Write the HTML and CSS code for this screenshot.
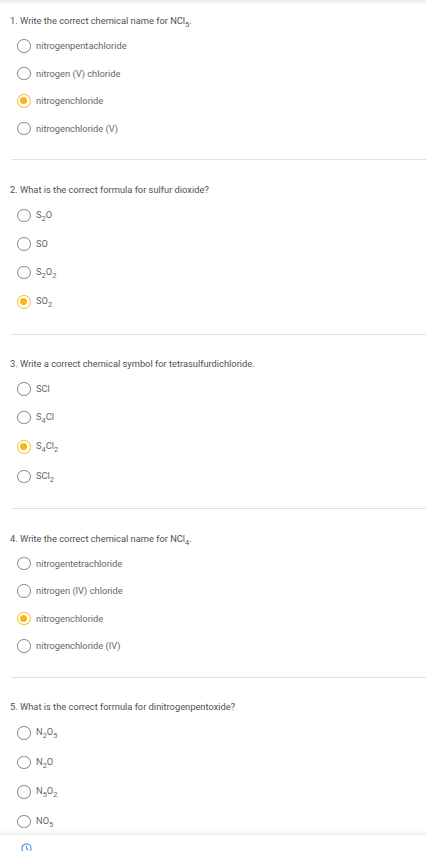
FILE: index.html
```html
<!DOCTYPE html>
<html>
<head>
<meta charset="utf-8">
<link rel="stylesheet" href="styles.css">
</head>
<body>
<div class="topshade"></div>
<main class="quiz">
  <section class="question">
    <div class="q-title">1. Write the correct chemical name for NCl<sub>5</sub>.</div>
    <ul class="options">
      <li class="option"><span class="radio"></span><span class="label">nitrogenpentachloride</span></li>
      <li class="option"><span class="radio"></span><span class="label">nitrogen (V) chloride</span></li>
      <li class="option"><span class="radio checked"></span><span class="label">nitrogenchloride</span></li>
      <li class="option"><span class="radio"></span><span class="label">nitrogenchloride (V)</span></li>
    </ul>
  </section>
  <hr class="divider">
  <section class="question">
    <div class="q-title">2. What is the correct formula for sulfur dioxide?</div>
    <ul class="options">
      <li class="option"><span class="radio"></span><span class="label">S<sub>2</sub>O</span></li>
      <li class="option"><span class="radio"></span><span class="label">SO</span></li>
      <li class="option"><span class="radio"></span><span class="label">S<sub>2</sub>O<sub>2</sub></span></li>
      <li class="option"><span class="radio checked"></span><span class="label">SO<sub>2</sub></span></li>
    </ul>
  </section>
  <hr class="divider">
  <section class="question">
    <div class="q-title">3. Write a correct chemical symbol for tetrasulfurdichloride.</div>
    <ul class="options">
      <li class="option"><span class="radio"></span><span class="label">SCl</span></li>
      <li class="option"><span class="radio"></span><span class="label">S<sub>4</sub>Cl</span></li>
      <li class="option"><span class="radio checked"></span><span class="label">S<sub>4</sub>Cl<sub>2</sub></span></li>
      <li class="option"><span class="radio"></span><span class="label">SCl<sub>2</sub></span></li>
    </ul>
  </section>
  <hr class="divider">
  <section class="question">
    <div class="q-title">4. Write the correct chemical name for NCl<sub>4</sub>.</div>
    <ul class="options">
      <li class="option"><span class="radio"></span><span class="label">nitrogentetrachloride</span></li>
      <li class="option"><span class="radio"></span><span class="label">nitrogen (IV) chloride</span></li>
      <li class="option"><span class="radio checked"></span><span class="label">nitrogenchloride</span></li>
      <li class="option"><span class="radio"></span><span class="label">nitrogenchloride (IV)</span></li>
    </ul>
  </section>
  <hr class="divider">
  <section class="question">
    <div class="q-title">5. What is the correct formula for dinitrogenpentoxide?</div>
    <ul class="options">
      <li class="option"><span class="radio"></span><span class="label">N<sub>2</sub>O<sub>5</sub></span></li>
      <li class="option"><span class="radio"></span><span class="label">N<sub>2</sub>O</span></li>
      <li class="option"><span class="radio"></span><span class="label">N<sub>5</sub>O<sub>2</sub></span></li>
      <li class="option"><span class="radio"></span><span class="label">NO<sub>5</sub></span></li>
    </ul>
  </section>
  <hr class="divider">
</main>
<footer class="bottombar">
  <svg class="clock" width="11" height="11" viewBox="0 0 12 12">
    <circle cx="6" cy="6" r="5" fill="none" stroke="#4a8fdc" stroke-width="1.2"/>
    <path d="M6 3.2V6.2L7.8 7.4" fill="none" stroke="#4a8fdc" stroke-width="1.1" stroke-linecap="round"/>
  </svg>
</footer>
</body>
</html>
```

FILE: styles.css
```css
html, body {
  margin: 0;
  padding: 0;
  background: #ffffff;
}

body {
  font-family: Roboto, "Liberation Sans", sans-serif;
  font-size: 9.3px;
  color: #505050;
}

.topshade {
  position: fixed;
  top: -4px;
  left: 0;
  right: 0;
  height: 4px;
  box-shadow: 0 0 4px 1px rgba(0, 0, 0, 0.14);
}

.quiz {
  padding-top: 15px;
  padding-bottom: 40px;
}

.question {
  padding: 0 0 17px 10px;
}

.divider + .question {
  padding-top: 23.5px;
}

.q-title {
  line-height: 12px;
  color: #505050;
}

sub {
  font-size: 80%;
  vertical-align: sub;
  line-height: 0;
}

.options {
  list-style: none;
  margin: 5px 0 0 0;
  padding: 0;
}

.option {
  display: flex;
  align-items: center;
  min-height: 27.5px;
  line-height: 13px;
  color: #666666;
}

.label {
  padding: 7px 0;
}

.option sub {
  line-height: 9.5px;
  vertical-align: -3px;
}

.radio {
  box-sizing: border-box;
  width: 13.5px;
  height: 13.5px;
  margin-left: 7px;
  margin-right: 5.5px;
  border: 1.2px solid #808080;
  border-radius: 50%;
  display: flex;
  align-items: center;
  justify-content: center;
  flex: none;
}

.radio.checked {
  border-color: #f8b616;
}

.radio.checked::after {
  content: "";
  width: 7px;
  height: 7px;
  border-radius: 50%;
  background: #f8b616;
}

.divider {
  border: 0;
  height: 1px;
  background: #e0e0e0;
  margin: 0 0 0 11px;
}

.bottombar {
  position: fixed;
  left: 0;
  right: 0;
  bottom: 0;
  height: 16px;
  background: #ffffff;
  box-shadow: 0 -1px 4px rgba(0, 0, 0, 0.08);
  border-top: 1px solid #ececec;
}

.clock {
  position: absolute;
  left: 21px;
  top: 8px;
}
```
